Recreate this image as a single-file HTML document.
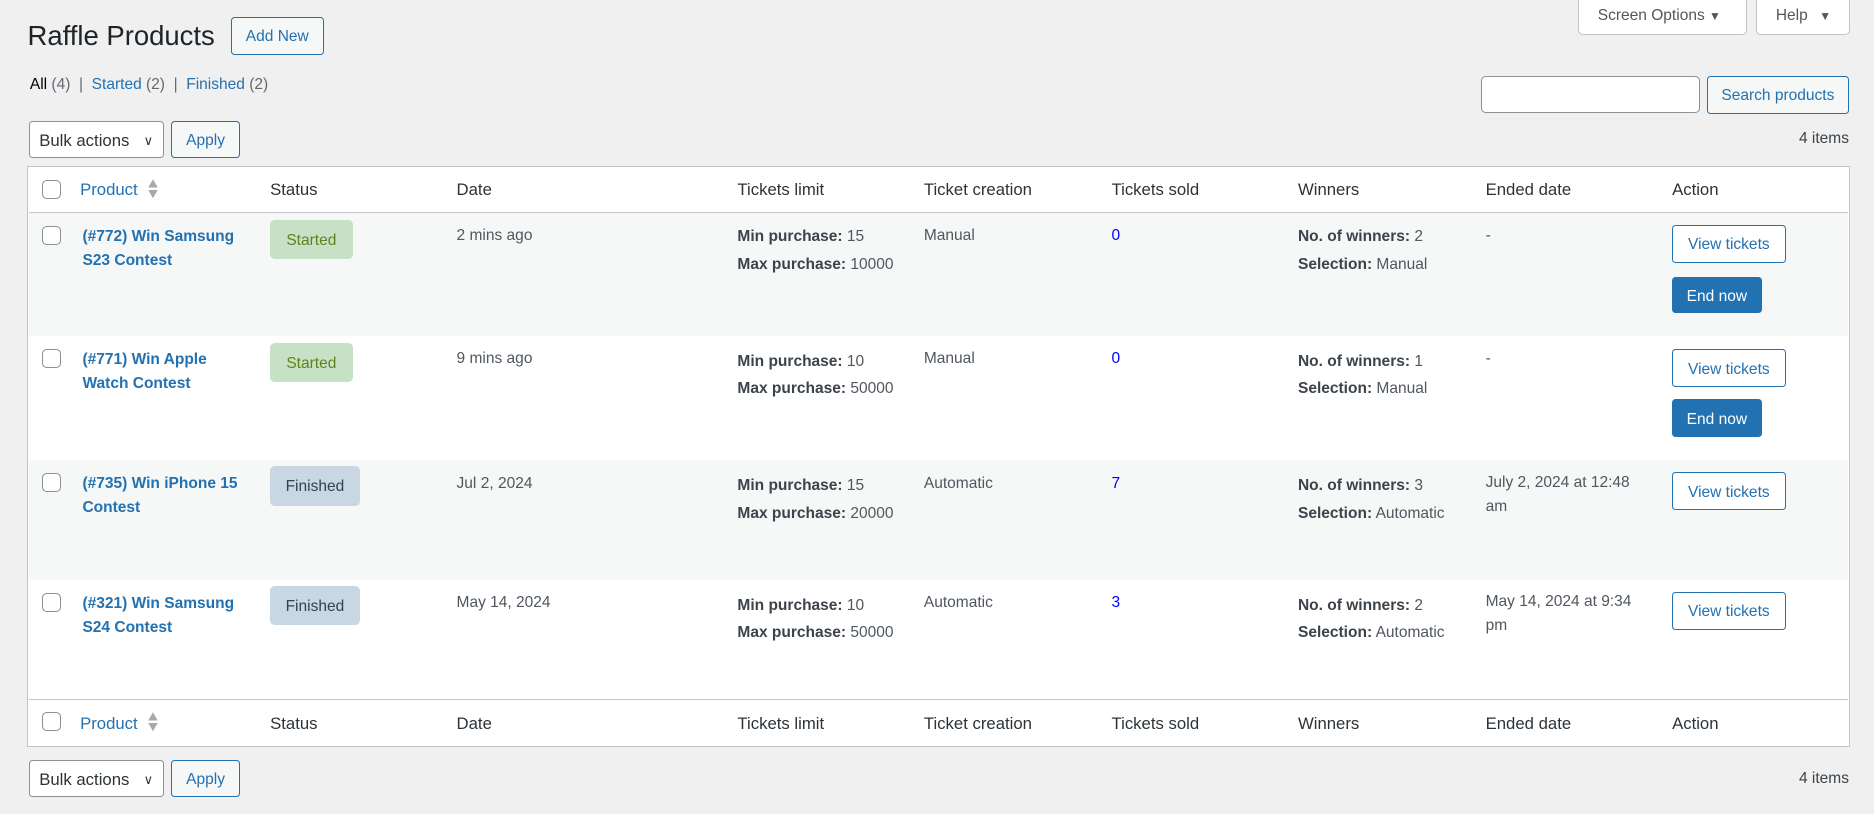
<!DOCTYPE html>
<html><head><meta charset="utf-8"><style>
html,body{margin:0;padding:0;background:#f0f0f1;}
body{width:1874px;height:814px;overflow:hidden;}
#w{zoom:1.1952;position:relative;width:1568px;height:681px;font-family:"Liberation Sans",sans-serif;font-size:13px;color:#3c434a;}
.a{position:absolute;white-space:nowrap;}
.btn{position:absolute;box-sizing:border-box;border:1px solid #2271b1;border-radius:3px;color:#2271b1;background:#f6f7f7;font-size:13px;display:flex;align-items:center;justify-content:center;padding-top:2px;line-height:1 !important;}
.wbtn{position:absolute;box-sizing:border-box;border:1px solid #c3c4c7;border-radius:3px;background:#fff;color:#50575e;font-size:13px;}
.sel{position:absolute;box-sizing:border-box;border:1px solid #8c8f94;border-radius:3px;background:#fff;color:#2c3338;font-size:14px;padding-left:8px;}
.cb{position:absolute;width:14px;height:14px;border:1px solid #8c8f94;border-radius:4px;background:#fff;}
.row{position:absolute;left:24px;width:1522px;}
.h{position:absolute;font-size:14px;color:#2c3338;top:11px;line-height:16px;}
.t{position:absolute;font-size:13px;color:#50575e;line-height:23px;}
.t b{color:#3c434a;}
.p{position:absolute;left:45px;font-weight:bold;color:#2271b1;font-size:13px;line-height:20px;top:10px;}
.badge{position:absolute;left:202px;top:6px;height:33px;line-height:35px;border-radius:4px;font-size:13px;text-align:center;}
.st{background:#c6e1c6;color:#5b841b;width:69px;}
.fi{background:#c8d7e1;color:#2e4453;width:75px;}
.sort{position:absolute;left:56px;top:-2px;}
</style></head><body><div id="w">
<div class="wbtn" style="left:1320px;top:-1px;width:142px;height:30px;line-height:28px;padding-left:16px;border-top:none;border-radius:0 0 4px 4px;">Screen Options <span style="font-size:10px">▼</span></div>
<div class="wbtn" style="left:1469px;top:-1px;width:79px;height:30px;line-height:28px;padding-left:16px;border-top:none;border-radius:0 0 4px 4px;">Help <span style="font-size:10px;margin-left:6px">▼</span></div>
<div class="a" style="left:23px;top:15px;font-size:23px;color:#1d2327;line-height:30px;">Raffle Products</div>
<div class="btn" style="left:193px;top:14px;width:78px;height:32px;">Add New</div>
<div class="a" style="left:25px;top:62px;line-height:18px;color:#646970;"><span style="color:#000">All</span> (4) &nbsp;|&nbsp; <span style="color:#2271b1">Started</span> (2) &nbsp;|&nbsp; <span style="color:#2271b1">Finished</span> (2)</div>
<div class="a" style="left:1239px;top:64px;width:182px;height:29px;border:1px solid #8c8f94;border-radius:4px;background:#fff;"></div>
<div class="btn" style="left:1428px;top:64px;width:119px;height:31px;">Search products</div>
<div class="sel" style="left:24px;top:101px;width:113px;height:31px;line-height:31px;">Bulk actions <span style="position:absolute;right:8px;font-size:11px">&#x2228;</span></div>
<div class="btn" style="left:143px;top:101px;width:58px;height:31px;">Apply</div>
<div class="a" style="right:21px;top:109px;">4 items</div>

<div class="a" style="left:23px;top:139px;width:1523px;height:484px;border:1px solid #c3c4c7;background:#fff;"></div>
<div class="row" style="top:140px;height:37px;border-bottom:1px solid #c3c4c7;background:#fff;">
<div class="cb" style="left:11px;top:11px"></div>
<div class="h" style="left:43px;color:#2271b1">Product<svg class="sort" width="10" height="18" viewBox="0 0 10 18"><path d="M5 1L9 8H1Z" fill="#a7aaad"/><path d="M5 17L9 10H1Z" fill="#a7aaad"/></svg></div>
<div class="h" style="left:202px">Status</div><div class="h" style="left:358px">Date</div><div class="h" style="left:593px">Tickets limit</div><div class="h" style="left:749px">Ticket creation</div><div class="h" style="left:906px">Tickets sold</div><div class="h" style="left:1062px">Winners</div><div class="h" style="left:1219px">Ended date</div><div class="h" style="left:1375px">Action</div>
</div>

<div class="row" style="top:178px;height:103px;background:#f6f7f7;">
<div class="cb" style="left:11px;top:11px"></div>
<div class="p">(#772) Win Samsung<br>S23 Contest</div>
<div class="badge st">Started</div>
<div class="t" style="left:358px;top:8px">2 mins ago</div>
<div class="t" style="left:593px;top:9px"><b>Min purchase:</b> 15<br><b>Max purchase:</b> 10000</div>
<div class="t" style="left:749px;top:8px">Manual</div>
<div class="t" style="left:906px;top:8px;color:#00f">0</div>
<div class="t" style="left:1062px;top:9px"><b>No. of winners:</b> 2<br><b>Selection:</b> Manual</div>
<div class="t" style="left:1219px;top:8px">-</div>
<div class="btn" style="left:1375px;top:10px;width:95px;height:32px;background:#fff">View tickets</div>
<div class="btn" style="left:1375px;top:54px;width:75px;height:30px;background:#2271b1;color:#fff">End now</div>
</div>

<div class="row" style="top:281px;height:104px;background:#fff;">
<div class="cb" style="left:11px;top:11px"></div>
<div class="p">(#771) Win Apple<br>Watch Contest</div>
<div class="badge st">Started</div>
<div class="t" style="left:358px;top:8px">9 mins ago</div>
<div class="t" style="left:593px;top:10px"><b>Min purchase:</b> 10<br><b>Max purchase:</b> 50000</div>
<div class="t" style="left:749px;top:8px">Manual</div>
<div class="t" style="left:906px;top:8px;color:#00f">0</div>
<div class="t" style="left:1062px;top:10px"><b>No. of winners:</b> 1<br><b>Selection:</b> Manual</div>
<div class="t" style="left:1219px;top:8px">-</div>
<div class="btn" style="left:1375px;top:11px;width:95px;height:32px;background:#fff">View tickets</div>
<div class="btn" style="left:1375px;top:53px;width:75px;height:32px;background:#2271b1;color:#fff">End now</div>
</div>

<div class="row" style="top:385px;height:100px;background:#f6f7f7;">
<div class="cb" style="left:11px;top:11px"></div>
<div class="p">(#735) Win iPhone 15<br>Contest</div>
<div class="badge fi" style="top:5px">Finished</div>
<div class="t" style="left:358px;top:8px">Jul 2, 2024</div>
<div class="t" style="left:593px;top:10px"><b>Min purchase:</b> 15<br><b>Max purchase:</b> 20000</div>
<div class="t" style="left:749px;top:8px">Automatic</div>
<div class="t" style="left:906px;top:8px;color:#00f">7</div>
<div class="t" style="left:1062px;top:10px"><b>No. of winners:</b> 3<br><b>Selection:</b> Automatic</div>
<div class="t" style="left:1219px;top:9px;line-height:20px">July 2, 2024 at 12:48<br>am</div>
<div class="btn" style="left:1375px;top:10px;width:95px;height:32px;background:#fff">View tickets</div>
</div>

<div class="row" style="top:485px;height:100px;background:#fff;border-bottom:1px solid #c3c4c7;">
<div class="cb" style="left:11px;top:11px"></div>
<div class="p">(#321) Win Samsung<br>S24 Contest</div>
<div class="badge fi" style="top:5px">Finished</div>
<div class="t" style="left:358px;top:8px">May 14, 2024</div>
<div class="t" style="left:593px;top:10px"><b>Min purchase:</b> 10<br><b>Max purchase:</b> 50000</div>
<div class="t" style="left:749px;top:8px">Automatic</div>
<div class="t" style="left:906px;top:8px;color:#00f">3</div>
<div class="t" style="left:1062px;top:10px"><b>No. of winners:</b> 2<br><b>Selection:</b> Automatic</div>
<div class="t" style="left:1219px;top:9px;line-height:20px">May 14, 2024 at 9:34<br>pm</div>
<div class="btn" style="left:1375px;top:10px;width:95px;height:32px;background:#fff">View tickets</div>
</div>

<div class="row" style="top:586px;height:37px;background:#fff;">
<div class="cb" style="left:11px;top:10px"></div>
<div class="h" style="left:43px;top:11px;color:#2271b1">Product<svg class="sort" width="10" height="18" viewBox="0 0 10 18"><path d="M5 1L9 8H1Z" fill="#a7aaad"/><path d="M5 17L9 10H1Z" fill="#a7aaad"/></svg></div>
<div class="h" style="left:202px">Status</div><div class="h" style="left:358px">Date</div><div class="h" style="left:593px">Tickets limit</div><div class="h" style="left:749px">Ticket creation</div><div class="h" style="left:906px">Tickets sold</div><div class="h" style="left:1062px">Winners</div><div class="h" style="left:1219px">Ended date</div><div class="h" style="left:1375px">Action</div>
</div>

<div class="sel" style="left:24px;top:636px;width:113px;height:31px;line-height:31px;">Bulk actions <span style="position:absolute;right:8px;font-size:11px">&#x2228;</span></div>
<div class="btn" style="left:143px;top:636px;width:58px;height:31px;">Apply</div>
<div class="a" style="right:21px;top:644px;">4 items</div>
</div></body></html>
